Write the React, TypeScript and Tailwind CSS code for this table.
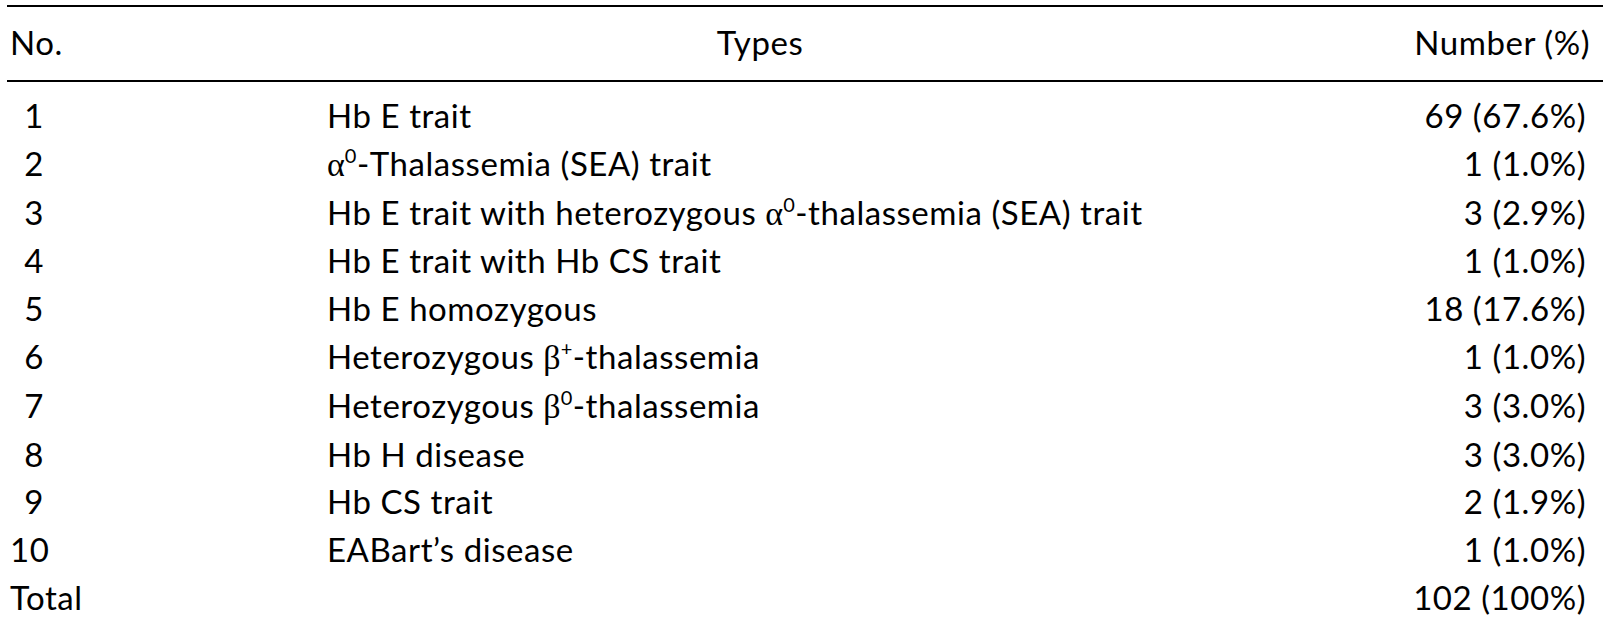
const rows: { no: string; type: React.ReactNode; num: string }[] = [
  { no: '1', type: 'Hb E trait', num: '69 (67.6%)' },
  {
    no: '2',
    type: (
      <>
        <Greek>α</Greek>
        <Sup>0</Sup>-Thalassemia (SEA) trait
      </>
    ),
    num: '1 (1.0%)',
  },
  {
    no: '3',
    type: (
      <>
        Hb E trait with heterozygous <Greek>α</Greek>
        <Sup>0</Sup>-thalassemia (SEA) trait
      </>
    ),
    num: '3 (2.9%)',
  },
  { no: '4', type: 'Hb E trait with Hb CS trait', num: '1 (1.0%)' },
  { no: '5', type: 'Hb E homozygous', num: '18 (17.6%)' },
  {
    no: '6',
    type: (
      <>
        Heterozygous <Greek>β</Greek>
        <Sup>+</Sup>-thalassemia
      </>
    ),
    num: '1 (1.0%)',
  },
  {
    no: '7',
    type: (
      <>
        Heterozygous <Greek>β</Greek>
        <Sup>0</Sup>-thalassemia
      </>
    ),
    num: '3 (3.0%)',
  },
  { no: '8', type: 'Hb H disease', num: '3 (3.0%)' },
  { no: '9', type: 'Hb CS trait', num: '2 (1.9%)' },
  { no: '10', type: 'EABart’s disease', num: '1 (1.0%)' },
];

function Greek({ children }: { children: React.ReactNode }) {
  return <span className="font-['Liberation_Serif',serif] text-[34px] tracking-normal">{children}</span>;
}

function Sup({ children }: { children: React.ReactNode }) {
  return <span className="relative -top-[13px] text-[20px] leading-none">{children}</span>;
}

export default function App() {
  return (
    <div className="w-[1611px] h-[630px] bg-white text-black font-['Lato',sans-serif] text-[33px] tracking-[0.55px] pt-[5px] pl-[7px] pr-[8px]">
      <div className="border-t-2 border-black">
        <div className="grid grid-cols-[320px_866px_1fr] leading-[48px] pt-[11px] pb-[14px] border-b-2 border-black">
          <div className="pl-[3px]">No.</div>
          <div className="text-center">Types</div>
          <div className="text-right pr-[13px]">Number (%)</div>
        </div>
        <div className="pt-[10px]">
          {rows.map((r) => (
            <div key={r.no} className="grid grid-cols-[320px_866px_1fr] leading-[47.8px]">
              <div className="pl-[3px]">
                <span className="inline-block w-[34px] text-right">{r.no}</span>
              </div>
              <div className="whitespace-nowrap">{r.type}</div>
              <div className="text-right pr-[17px]">{r.num}</div>
            </div>
          ))}
          <div className="grid grid-cols-[320px_866px_1fr] leading-[47.8px]">
            <div className="pl-[3px]">Total</div>
            <div></div>
            <div className="text-right pr-[17px]">102 (100%)</div>
          </div>
        </div>
      </div>
    </div>
  );
}
